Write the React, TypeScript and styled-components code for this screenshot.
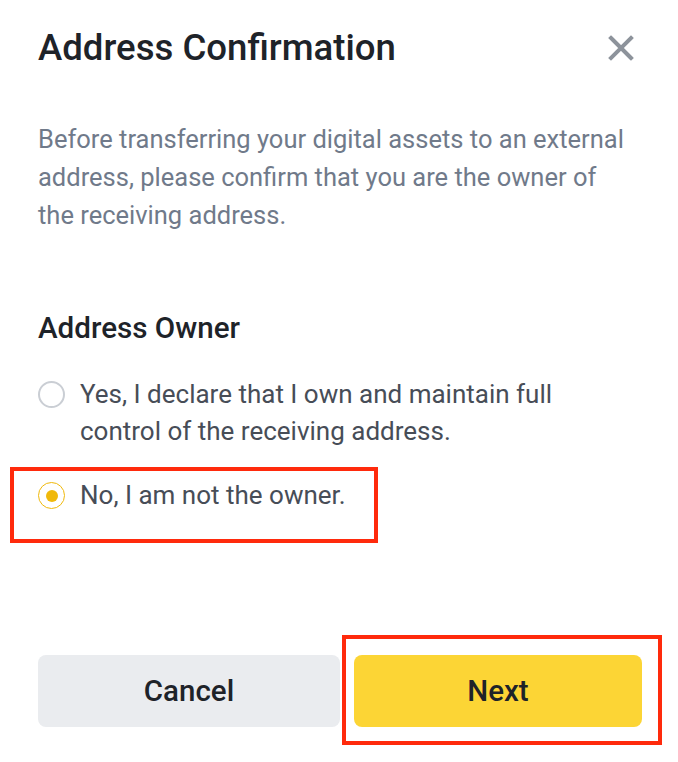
import React, { useState } from "react";
import styled, { createGlobalStyle, css } from "styled-components";

const GlobalStyle = createGlobalStyle`
  html, body { margin: 0; padding: 0; background: #ffffff; }
  body { font-family: Roboto, "Liberation Sans", Arial, sans-serif; -webkit-font-smoothing: antialiased; }
  *, *::before, *::after { box-sizing: border-box; }
`;

const Dialog = styled.div`
  width: 678px;
  height: 762px;
  padding: 26px 36px 35px 38px;
  display: flex;
  flex-direction: column;
  background: #ffffff;
`;

const Header = styled.div`
  display: flex;
  align-items: center;
  justify-content: space-between;
  height: 44px;
`;

const Title = styled.h2`
  margin: 0;
  font-size: 36.6px;
  line-height: 44px;
  font-weight: 500;
  color: #1e2329;
  letter-spacing: 0;
`;

const CloseButton = styled.button`
  width: 28px;
  height: 28px;
  margin-right: 7px;
  padding: 0;
  border: none;
  background: transparent;
  color: #8d939b;
  display: flex;
  align-items: center;
  justify-content: center;
  cursor: pointer;
`;

const Description = styled.p`
  margin: 50px 0 0;
  max-width: 592px;
  font-size: 25.5px;
  line-height: 38px;
  color: #707a8a;
  font-weight: 400;
`;

const SectionTitle = styled.h3`
  margin: 76px 0 0;
  font-size: 29.6px;
  line-height: 36px;
  font-weight: 500;
  color: #1e2329;
`;

const OptionList = styled.div`
  margin-top: 30px;
  display: flex;
  flex-direction: column;
  gap: 27px;
`;

const annotation = css`
  position: relative;
  &::after {
    content: "";
    position: absolute;
    border: 4px solid #ff2a0c;
    pointer-events: none;
  }
`;

const Option = styled.label<{ $highlight?: boolean }>`
  display: flex;
  align-items: flex-start;
  gap: 15px;
  cursor: pointer;
  ${(p) =>
    p.$highlight &&
    css`
      ${annotation}
      &::after {
        top: -10px;
        left: -28px;
        width: 368px;
        height: 76px;
      }
    `}
`;

const RadioCircle = styled.span<{ $checked: boolean }>`
  flex: none;
  width: 27px;
  height: 27px;
  margin-top: 5px;
  border-radius: 50%;
  border: ${(p) => (p.$checked ? "1.5px solid #f0b90b" : "2px solid #caced4")};
  display: flex;
  align-items: center;
  justify-content: center;
  &::before {
    content: "";
    width: 12px;
    height: 12px;
    border-radius: 50%;
    background: #f0b90b;
    display: ${(p) => (p.$checked ? "block" : "none")};
  }
`;

const OptionText = styled.span`
  max-width: 500px;
  font-size: 26px;
  line-height: 37px;
  color: #474d57;
`;

const Footer = styled.div`
  margin-top: auto;
  display: grid;
  grid-template-columns: 302px 288px;
  column-gap: 14px;
`;

const Button = styled.button<{ $primary?: boolean; $highlight?: boolean }>`
  height: 72px;
  border: none;
  border-radius: 8px;
  font-family: inherit;
  font-size: 29.5px;
  font-weight: 500;
  color: #1e2329;
  background: ${(p) => (p.$primary ? "#fcd535" : "#eaecef")};
  cursor: pointer;
  ${(p) =>
    p.$highlight &&
    css`
      ${annotation}
      &::after {
        top: -20px;
        left: -12px;
        right: -20px;
        bottom: -18px;
      }
    `}
`;

const options = [
  { id: "yes", text: "Yes, I declare that I own and maintain full control of the receiving address." },
  { id: "no", text: "No, I am not the owner." },
];

export default function App() {
  const [value, setValue] = useState("no");
  return (
    <>
      <GlobalStyle />
      <Dialog>
        <Header>
          <Title>Address Confirmation</Title>
          <CloseButton aria-label="Close">
            <svg width="26" height="26" viewBox="0 0 26 26">
              <path d="M3 3 L23 23 M23 3 L3 23" stroke="currentColor" strokeWidth="4" strokeLinecap="square" />
            </svg>
          </CloseButton>
        </Header>
        <Description>
          Before transferring your digital assets to an external address, please confirm that you are the owner of
          the receiving address.
        </Description>
        <SectionTitle>Address Owner</SectionTitle>
        <OptionList>
          {options.map((o) => (
            <Option key={o.id} $highlight={o.id === "no"} onClick={() => setValue(o.id)}>
              <RadioCircle $checked={value === o.id} />
              <OptionText>{o.text}</OptionText>
            </Option>
          ))}
        </OptionList>
        <Footer>
          <Button>Cancel</Button>
          <Button $primary $highlight>
            Next
          </Button>
        </Footer>
      </Dialog>
    </>
  );
}
